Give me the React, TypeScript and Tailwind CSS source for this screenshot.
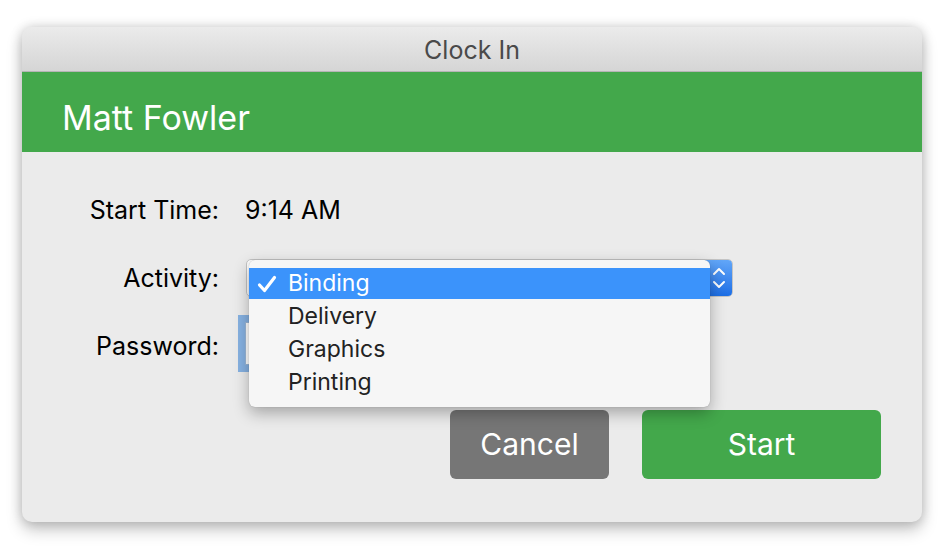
import React from "react";

const items = ["Binding", "Delivery", "Graphics", "Printing"];

const App = () => {
  return (
    <div className="min-h-screen bg-white pt-[27px] pl-[22px] font-['Inter',sans-serif]">
      <div className="w-[900px] h-[495px] rounded-[10px] bg-[#ebebeb] overflow-hidden shadow-[0_0_12px_rgba(0,0,0,0.18),0_8px_16px_rgba(0,0,0,0.22)]">
        {/* title bar */}
        <div className="h-[45px] flex items-center justify-center pt-[3px] bg-gradient-to-b from-[#ebebeb] to-[#d5d5d5] border-b border-[#b5b5b5] text-[25px] text-[#4a4a4a]">
          Clock In
        </div>

        {/* name header */}
        <div className="h-[80px] bg-[#43a84b] flex items-center pl-[40px] pt-[10px] text-white text-[34px]">
          Matt Fowler
        </div>

        {/* form */}
        <div className="relative pt-[39px] text-[25px] text-black">
          <div className="flex items-center h-[38px] pt-[2px]">
            <div className="w-[197px] text-right">Start Time:</div>
            <div className="ml-[26px]">9:14 AM</div>
          </div>

          <div className="flex items-center h-[38px] mt-[30px]">
            <div className="w-[197px] text-right pt-[2px]">Activity:</div>
            <div className="ml-[27px] w-[487px] h-[38px] flex bg-white border border-[#c4c4c4] rounded-[5px] overflow-hidden">
              <div className="flex-1" />
              <div className="w-[27px] h-full bg-gradient-to-b from-[#62a6f8] to-[#1b6ee6] flex items-center justify-center">
                <svg width="16" height="26" viewBox="0 0 16 26" fill="none" stroke="white" strokeWidth="2" strokeLinecap="round" strokeLinejoin="round">
                  <path d="M3 9 L8 4 L13 9" />
                  <path d="M3 17 L8 22 L13 17" />
                </svg>
              </div>
            </div>
          </div>

          <div className="flex items-center h-[43px] mt-[25px]">
            <div className="w-[197px] text-right pt-[6px]">Password:</div>
            <div className="ml-[26px] w-[455px] h-[43px] bg-white border border-[#9bb7d8] ring-[7px] ring-[#86b1e1]" />
          </div>

          <div className="flex justify-end gap-[33px] pr-[41px] mt-[45px]">
            <button className="w-[159px] h-[69px] rounded-[6px] bg-[#767676] text-white text-[30px]">
              Cancel
            </button>
            <button className="w-[239px] h-[69px] rounded-[6px] bg-[#43a84b] text-white text-[30px]">
              Start
            </button>
          </div>

          {/* open activity menu */}
          <div className="absolute left-[227px] top-[108px] w-[461px] h-[147px] py-[8px] rounded-[6px] bg-[#f6f6f6] shadow-[0_6px_16px_rgba(0,0,0,0.3),0_0_1px_rgba(0,0,0,0.3)] text-[23px] text-[#222]">
            {items.map((name, i) =>
              i === 0 ? (
                <div key={name} className="h-[31px] mb-[1px] flex items-center bg-[#3b93fb] text-white">
                  <svg className="ml-[8px] w-[20px] h-[18px]" viewBox="0 0 20 18" fill="none" stroke="white" strokeWidth="3.2" strokeLinecap="round" strokeLinejoin="round">
                    <path d="M2.5 10 L7.5 15.5 L17.5 2.5" />
                  </svg>
                  <span className="ml-[11px]">{name}</span>
                </div>
              ) : (
                <div key={name} className="h-[33px] flex items-center pl-[39px]">
                  {name}
                </div>
              )
            )}
          </div>
        </div>
      </div>
    </div>
  );
};

export default App;
